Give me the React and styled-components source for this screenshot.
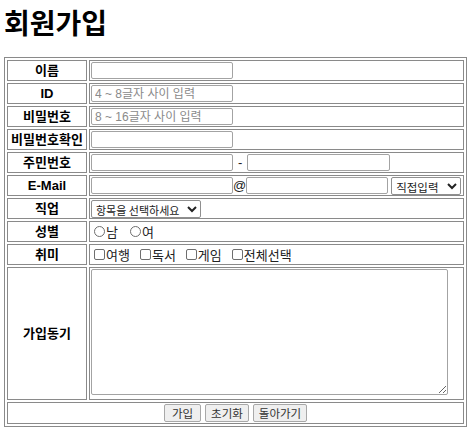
import React from 'react';
import styled, { createGlobalStyle } from 'styled-components';

const GlobalStyle = createGlobalStyle`
  body {
    margin: 0;
    background: #fff;
    font-family: "Liberation Sans", "Noto Sans CJK KR", sans-serif;
    color: #000;
  }
`

const Page = styled.div`
  padding: 0 0 0 4px;
`

const Title = styled.h1`
  margin: 0 0 20px;
  padding-top: 8px;
  font-size: 28px;
  line-height: 29px;
  font-weight: bold;
  font-family: "Noto Sans CJK KR", sans-serif;
`

const Table = styled.table`
  width: 463px;
  border: 1px solid #8a8a8a;
  border-spacing: 2px;
  border-collapse: separate;
`

const Label = styled.th`
  width: 78px;
  padding: 1px 0;
  border: 1px solid #8a8a8a;
  font-size: 13px;
  line-height: 17px;
  font-weight: bold;
  white-space: nowrap;
  text-align: center;
  vertical-align: middle;
`

const Cell = styled.td`
  padding: 1px;
  border: 1px solid #8a8a8a;
  vertical-align: middle;
`

const Field = styled.div`
  display: flex;
  align-items: center;
  justify-content: ${p => (p.center ? 'center' : 'flex-start')};
  gap: ${p => p.gap || 0}px;
  height: ${p => p.h || 17}px;
  font-size: 13px;
`

const TextInput = styled.input`
  box-sizing: border-box;
  width: ${p => p.w || 142}px;
  height: 17px;
  margin: 0;
  padding: 0 3px;
  border: 1px solid #a3a3a3;
  border-radius: 2px;
  font-family: "Liberation Sans", "Noto Sans CJK KR", sans-serif;
  font-size: 12px;
  &::placeholder {
    color: #8a8a8a;
  }
`

const Select = styled.select`
  box-sizing: border-box;
  width: ${p => p.w}px;
  height: 18px;
  margin: 0 0 0 ${p => p.ml || 0}px;
  padding: 0;
  border: 1px solid #8f8f8f;
  border-radius: 2px;
  background: #fff;
  color: #222;
  font-family: "Noto Sans CJK KR", sans-serif;
  font-size: ${p => p.fs || 11.5}px;
`

const Sep = styled.span`
  padding: 0 ${p => p.pad}px;
  font-size: 13px;
  color: #222;
`

const Choice = styled.label`
  display: inline-flex;
  align-items: center;
  margin-right: ${p => p.mr || 0}px;
  font-family: "Noto Sans CJK KR", sans-serif;
  font-size: 13px;
  color: #222;
`

const Mark = styled.input`
  appearance: none;
  box-sizing: border-box;
  width: 11px;
  height: 11px;
  margin: 0 1px 0 3px;
  border: 1px solid #6e6e6e;
  border-radius: ${p => (p.type === 'radio' ? '50%' : '2px')};
  background: #fff;
`

const Memo = styled.textarea`
  display: block;
  box-sizing: border-box;
  width: 357px;
  height: 126px;
  margin: 0 0 3px;
  border: 1px solid #a3a3a3;
  border-radius: 2px;
  resize: both;
`

const Button = styled.button`
  box-sizing: border-box;
  height: 18px;
  padding: 0 ${p => p.px || 5}px;
  border: 1px solid #a8a8a8;
  border-radius: 2px;
  background: #efefef;
  color: #333;
  font-family: "Noto Sans CJK KR", sans-serif;
  font-size: 11.5px;
  line-height: 16px;
`

const hobbies = ['여행', '독서', '게임', '전체선택']

export default function App() {
  return (
    <Page>
      <GlobalStyle />
      <Title>회원가입</Title>
      <Table>
        <tbody>
          <tr>
            <Label>이름</Label>
            <Cell><Field><TextInput /></Field></Cell>
          </tr>
          <tr>
            <Label>ID</Label>
            <Cell><Field><TextInput placeholder="4 ~ 8글자 사이 입력" /></Field></Cell>
          </tr>
          <tr>
            <Label>비밀번호</Label>
            <Cell><Field><TextInput type="text" placeholder="8 ~ 16글자 사이 입력" /></Field></Cell>
          </tr>
          <tr>
            <Label>비밀번호확인</Label>
            <Cell><Field><TextInput /></Field></Cell>
          </tr>
          <tr>
            <Label>주민번호</Label>
            <Cell>
              <Field>
                <TextInput />
                <Sep pad={5}>-</Sep>
                <TextInput w={143} />
              </Field>
            </Cell>
          </tr>
          <tr>
            <Label>E-Mail</Label>
            <Cell>
              <Field>
                <TextInput />
                <Sep pad={0}>@</Sep>
                <TextInput />
                <Select w={70} ml={3} defaultValue="direct">
                  <option value="direct">직접입력</option>
                </Select>
              </Field>
            </Cell>
          </tr>
          <tr>
            <Label>직업</Label>
            <Cell>
              <Field>
                <Select w={110} fs={11} defaultValue="none">
                  <option value="none">항목을 선택하세요</option>
                </Select>
              </Field>
            </Cell>
          </tr>
          <tr>
            <Label>성별</Label>
            <Cell>
              <Field>
                <Choice mr={9}><Mark type="radio" name="gender" />남</Choice>
                <Choice><Mark type="radio" name="gender" />여</Choice>
              </Field>
            </Cell>
          </tr>
          <tr>
            <Label>취미</Label>
            <Cell>
              <Field>
                {hobbies.map(h => (
                  <Choice key={h} mr={7}><Mark type="checkbox" />{h}</Choice>
                ))}
              </Field>
            </Cell>
          </tr>
          <tr>
            <Label>가입동기</Label>
            <Cell><Memo /></Cell>
          </tr>
          <tr>
            <Cell colSpan={2}>
              <Field center gap={4} h={18}>
                <Button px={7}>가입</Button>
                <Button>초기화</Button>
                <Button>돌아가기</Button>
              </Field>
            </Cell>
          </tr>
        </tbody>
      </Table>
    </Page>
  )
}
